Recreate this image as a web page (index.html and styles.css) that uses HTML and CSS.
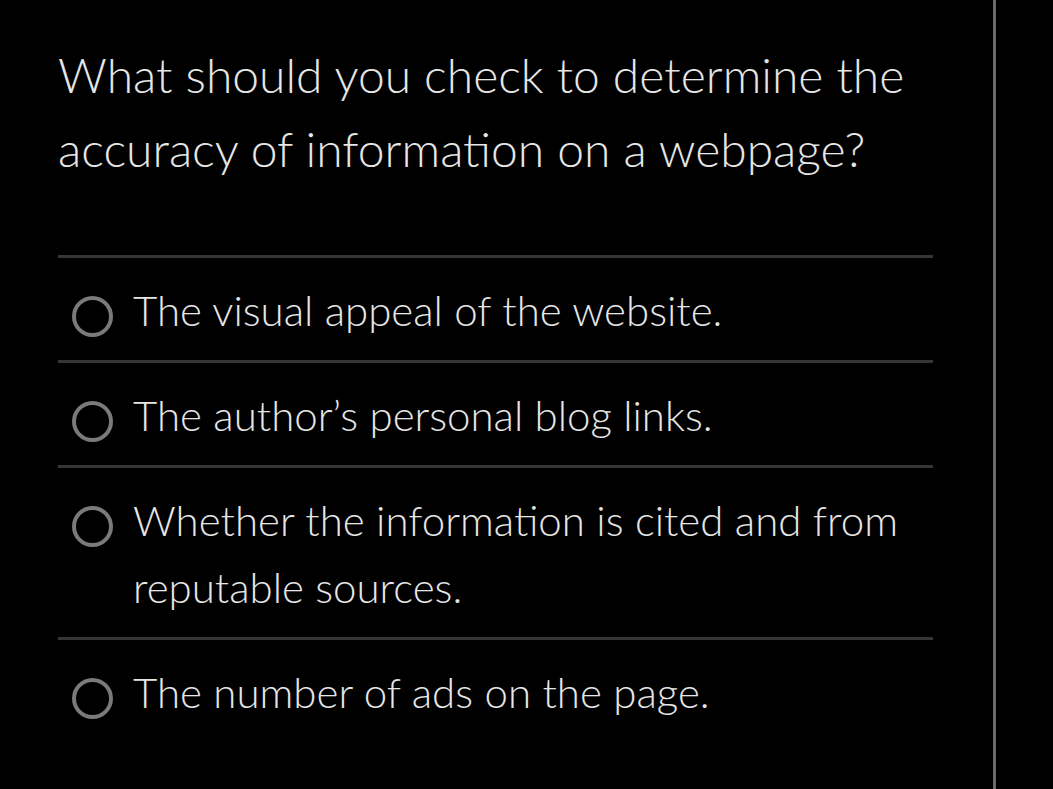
FILE: index.html
```html
<!DOCTYPE html>
<html>
<head>
<meta charset="utf-8">
<link rel="stylesheet" href="styles.css">
</head>
<body>
<div class="page">
  <main class="quiz">
    <h1 class="question">What should you check to determine the accuracy of information on a webpage?</h1>
    <ul class="answers">
      <li class="answer"><span class="radio"></span><span class="label">The visual appeal of the website.</span></li>
      <li class="answer"><span class="radio"></span><span class="label">The author’s personal blog links.</span></li>
      <li class="answer"><span class="radio"></span><span class="label">Whether the information is cited and from reputable sources.</span></li>
      <li class="answer"><span class="radio"></span><span class="label">The number of ads on the page.</span></li>
    </ul>
  </main>
  <div class="divider"></div>
</div>
</body>
</html>
```
FILE: styles.css
```css
html, body {
  margin: 0;
  padding: 0;
  background: #000;
  height: 100%;
  overflow: hidden;
}
.page {
  display: flex;
  height: 789px;
  font-family: "Lato Light", "Lato", "Open Sans", sans-serif;
  font-weight: 300;
  color: #e6e6e6;
}
.quiz {
  width: 875px;
  margin-left: 58px;
  margin-right: 60px;
}
.question {
  margin: 38px 0 0 0;
  font-size: 48px;
  font-weight: 300;
  line-height: 74px;
  letter-spacing: 0;
}
.answers {
  list-style: none;
  margin: 69px 0 0 0;
  padding: 0;
}
.answer {
  display: flex;
  align-items: flex-start;
  border-top: 3px solid #363636;
  padding: 19px 0 16px 0;
}
.radio {
  flex: none;
  box-sizing: border-box;
  width: 41px;
  height: 41px;
  border: 4px solid #7a7a7a;
  border-radius: 50%;
  margin: 19px 20px 0 14px;
}
.label {
  font-size: 42px;
  line-height: 67px;
}
.divider {
  width: 3px;
  background: #6b6b6b;
  height: 100%;
}
```
